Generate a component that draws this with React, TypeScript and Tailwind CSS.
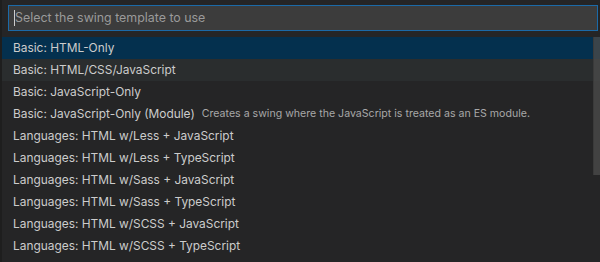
const items: { label: string; detail?: string }[] = [
  { label: "Basic: HTML-Only" },
  { label: "Basic: HTML/CSS/JavaScript" },
  { label: "Basic: JavaScript-Only" },
  {
    label: "Basic: JavaScript-Only (Module)",
    detail: "Creates a swing where the JavaScript is treated as an ES module.",
  },
  { label: "Languages: HTML w/Less + JavaScript" },
  { label: "Languages: HTML w/Less + TypeScript" },
  { label: "Languages: HTML w/Sass + JavaScript" },
  { label: "Languages: HTML w/Sass + TypeScript" },
  { label: "Languages: HTML w/SCSS + JavaScript" },
  { label: "Languages: HTML w/SCSS + TypeScript" },
];

export default function App() {
  return (
    <div className="flex w-[600px] h-[262px] overflow-hidden bg-[#1e1e1e] font-['Inter',sans-serif]">
      {/* editor peeking out on the left */}
      <div className="w-[2px] shrink-0 bg-[#1e1e1e]" />

      <div className="relative flex flex-1 flex-col bg-[#252526]">
        <div className="pt-[5px] pb-[6px] pl-[6px] pr-[2px]">
          <div className="flex h-[26px] items-center border border-[#1b6aa8] bg-[#3c3c3c] px-[5px]">
            <span className="h-[16px] w-px bg-[#cccccc]" />
            <span className="text-[12.4px] text-[#9a9a9a]">
              Select the swing template to use
            </span>
          </div>
        </div>

        <ul className="flex flex-col">
          {items.map((item, i) => (
            <li
              key={item.label}
              className={
                "flex h-[22px] items-center gap-[7px] pl-[11px] whitespace-nowrap " +
                (i === 0 ? "bg-[#04304e]" : i === 1 ? "bg-[#2a2d2e]" : "")
              }
            >
              <span className="text-[11.9px] text-[#cccccc]">{item.label}</span>
              {item.detail && (
                <span className="text-[10.6px] text-[#a8a8a8]">{item.detail}</span>
              )}
            </li>
          ))}
        </ul>

        {/* scrollbar thumb */}
        <div className="absolute right-0 top-[37px] h-[138px] w-[7px] border-l border-[#3a3a3a] bg-[#4a4a4a]/80" />
      </div>
    </div>
  );
}
